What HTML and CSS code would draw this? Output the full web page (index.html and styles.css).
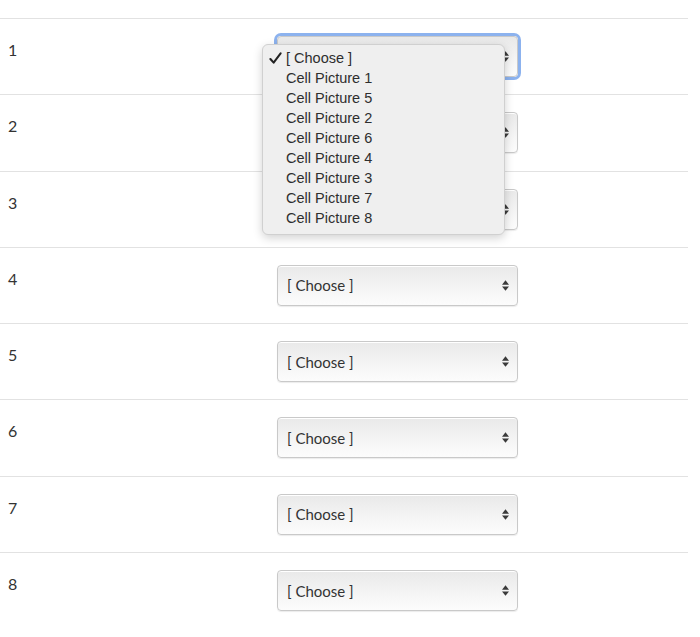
FILE: index.html
```html
<!DOCTYPE html>
<html lang="en">
<head>
  <meta charset="UTF-8">
  <meta name="viewport" content="width=device-width, initial-scale=1.0">
  <title>Cell pictures</title>
  <link rel="stylesheet" href="styles.css">
</head>
<body>
  <div class="grid">
    <div class="row">
      <div class="num">1</div>
      <div class="cell">
        <div class="select focused"><span>[ Choose ]</span><svg class="arrows" viewBox="0 0 8 12"><path d="M0 5 L4 0 L8 5 Z M0 7 L8 7 L4 12 Z"/></svg></div>
        <ul class="menu">
          <li class="checked"><svg class="check" viewBox="0 0 14 14"><path d="M1.5 7.5 L5 11.5 L12.5 1.5"/></svg>[ Choose ]</li>
          <li>Cell Picture 1</li>
          <li>Cell Picture 5</li>
          <li>Cell Picture 2</li>
          <li>Cell Picture 6</li>
          <li>Cell Picture 4</li>
          <li>Cell Picture 3</li>
          <li>Cell Picture 7</li>
          <li>Cell Picture 8</li>
        </ul>
      </div>
    </div>
    <div class="row">
      <div class="num">2</div>
      <div class="cell"><div class="select"><span>[ Choose ]</span><svg class="arrows" viewBox="0 0 8 12"><path d="M0 5 L4 0 L8 5 Z M0 7 L8 7 L4 12 Z"/></svg></div></div>
    </div>
    <div class="row">
      <div class="num">3</div>
      <div class="cell"><div class="select"><span>[ Choose ]</span><svg class="arrows" viewBox="0 0 8 12"><path d="M0 5 L4 0 L8 5 Z M0 7 L8 7 L4 12 Z"/></svg></div></div>
    </div>
    <div class="row">
      <div class="num">4</div>
      <div class="cell"><div class="select"><span>[ Choose ]</span><svg class="arrows" viewBox="0 0 8 12"><path d="M0 5 L4 0 L8 5 Z M0 7 L8 7 L4 12 Z"/></svg></div></div>
    </div>
    <div class="row">
      <div class="num">5</div>
      <div class="cell"><div class="select"><span>[ Choose ]</span><svg class="arrows" viewBox="0 0 8 12"><path d="M0 5 L4 0 L8 5 Z M0 7 L8 7 L4 12 Z"/></svg></div></div>
    </div>
    <div class="row">
      <div class="num">6</div>
      <div class="cell"><div class="select"><span>[ Choose ]</span><svg class="arrows" viewBox="0 0 8 12"><path d="M0 5 L4 0 L8 5 Z M0 7 L8 7 L4 12 Z"/></svg></div></div>
    </div>
    <div class="row">
      <div class="num">7</div>
      <div class="cell"><div class="select"><span>[ Choose ]</span><svg class="arrows" viewBox="0 0 8 12"><path d="M0 5 L4 0 L8 5 Z M0 7 L8 7 L4 12 Z"/></svg></div></div>
    </div>
    <div class="row">
      <div class="num">8</div>
      <div class="cell"><div class="select"><span>[ Choose ]</span><svg class="arrows" viewBox="0 0 8 12"><path d="M0 5 L4 0 L8 5 Z M0 7 L8 7 L4 12 Z"/></svg></div></div>
    </div>
  </div>
</body>
</html>
```

FILE: styles.css
```css
body {
  margin: 0;
  background: #fff;
  font-family: Lato, "Liberation Sans", sans-serif;
  font-size: 16px;
  line-height: 24px;
  color: #333;
}
.grid {
  width: 688px;
  padding-top: 18px;
}
.row {
  display: flex;
  height: 76.3px;
  border-top: 1px solid #e2e2e2;
  box-sizing: border-box;
}
.num {
  width: 269px;
  padding: 19px 8px 0;
  box-sizing: border-box;
}
.cell {
  position: relative;
  padding: 17px 8px 0;
}
.select {
  display: flex;
  align-items: center;
  justify-content: space-between;
  width: 241px;
  height: 41px;
  box-sizing: border-box;
  padding: 0 8px 0 9px;
  border: 1px solid #c9c9c9;
  border-radius: 4px;
  background: linear-gradient(#e9e9e9, #f7f7f7 70%, #fcfcfc);
  box-shadow: inset 0 1px 0 #fff, 0 1px 1px rgba(0, 0, 0, 0.08);
  font-size: 15px;
  color: #333;
}
.select.focused {
  box-shadow: 0 0 0 3px #8cb2ee;
}
.arrows {
  width: 7px;
  height: 11px;
  fill: #3a3a3a;
}
.menu {
  position: absolute;
  z-index: 10;
  top: 25px;
  left: -7px;
  width: 243px;
  box-sizing: border-box;
  margin: 0;
  padding: 3px 0 6px;
  list-style: none;
  background: #efefef;
  border: 1px solid #d0d0d0;
  border-radius: 6px;
  box-shadow: 0 3px 10px rgba(0, 0, 0, 0.18);
  font-family: "Liberation Sans", Arial, sans-serif;
  font-size: 14.5px;
  line-height: 20px;
  color: #2e2e2e;
}
.menu li {
  padding-left: 23px;
  position: relative;
}
.check {
  position: absolute;
  left: 6px;
  top: 4px;
  width: 13px;
  height: 13px;
  fill: none;
  stroke: #222;
  stroke-width: 2.2;
  stroke-linecap: round;
  stroke-linejoin: round;
}
```
